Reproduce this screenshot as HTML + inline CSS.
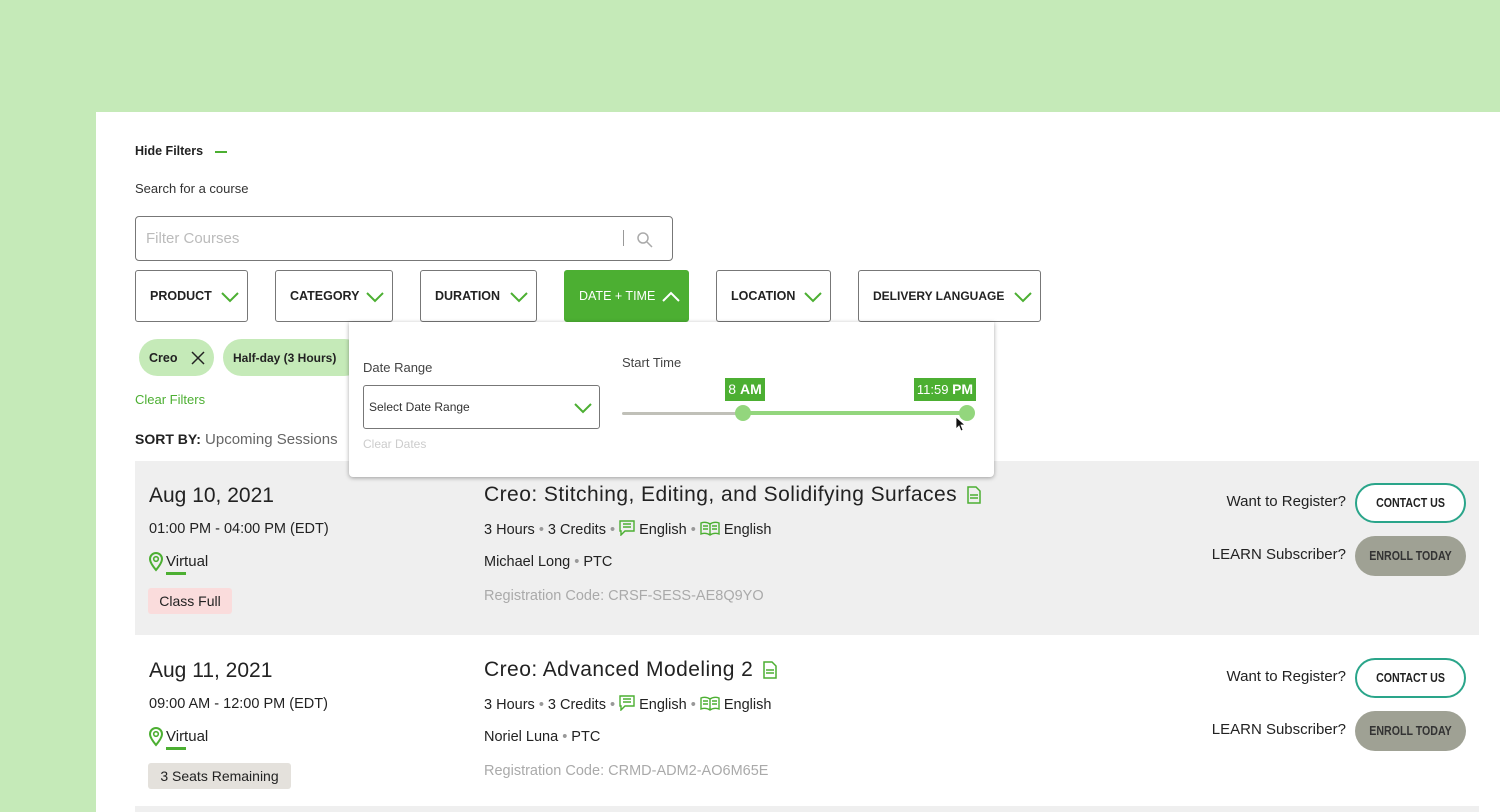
<!DOCTYPE html>
<html><head><meta charset="utf-8"><style>
*{box-sizing:border-box;margin:0;padding:0}
body{width:1500px;height:812px;overflow:hidden;background:#c5eab8;font-family:"Liberation Sans",sans-serif;color:#222;position:relative}
.abs{position:absolute}
.panel{left:96px;top:112px;width:1404px;height:700px;background:#fff}
.dd{top:270px;height:52px;border:1px solid #777;border-radius:3px;background:#fff;font-size:12.5px;font-weight:bold;display:flex;align-items:center;padding-left:14px;color:#222}
.dd svg{position:absolute;right:8px;top:20px}
.chip{top:339px;height:37px;border-radius:19px;background:#c5eab8;font-size:12.5px;font-weight:bold;display:flex;align-items:center;padding-left:10px}
.card{left:135px;width:1344px;height:174px}
.date{font-size:21px;color:#222}
.t{font-size:14.5px}
.g{color:#999}
.btn{width:111px;height:40px;border-radius:20px;font-size:12.5px;font-weight:bold;display:flex;align-items:center;justify-content:center}
.btn span{display:inline-block;transform:scaleX(.85)}
.c{border:2px solid #2aa58a;background:#fff;color:#222}
.e{background:#9fa194;color:#333}
.lab{font-size:15px;text-align:right;width:200px}
.title{font-size:21px;letter-spacing:.45px;display:flex;align-items:center;gap:10px}
.ic{display:inline-block;vertical-align:-2px}
</style></head><body>
<div class="abs panel"></div>
<div class="abs" style="left:135px;top:144px;font-size:12.5px;font-weight:bold">Hide Filters <span style="display:inline-block;width:12px;height:2px;background:#4caf32;vertical-align:middle;margin-left:8px"></span></div>
<div class="abs" style="left:135px;top:181px;font-size:13px;color:#333">Search for a course</div>
<div class="abs" style="left:135px;top:216px;width:538px;height:45px;border:1px solid #777;border-radius:4px;background:#fff"></div>
<div class="abs" style="left:146px;top:230px;font-size:15px;color:#bbb">Filter Courses</div>
<div class="abs" style="left:623px;top:230px;width:1px;height:16px;background:#999"></div>
<svg class="abs" style="left:636px;top:231px" width="18" height="18"><circle cx="7" cy="7" r="5" fill="none" stroke="#aaa" stroke-width="1.5"/><path d="M11 11l5 5" stroke="#aaa" stroke-width="1.5"/></svg>

<div class="abs dd" style="left:135px;width:113px">PRODUCT<svg width="18" height="12"><path d="M1 2l8 8 8-8" fill="none" stroke="#4caf32" stroke-width="2"/></svg></div>
<div class="abs dd" style="left:275px;width:118px">CATEGORY<svg width="18" height="12"><path d="M1 2l8 8 8-8" fill="none" stroke="#4caf32" stroke-width="2"/></svg></div>
<div class="abs dd" style="left:420px;width:117px">DURATION<svg width="18" height="12"><path d="M1 2l8 8 8-8" fill="none" stroke="#4caf32" stroke-width="2"/></svg></div>
<div class="abs dd" style="left:564px;width:125px;background:#4caf32;border-color:#4caf32;color:#fff;font-weight:normal">DATE + TIME<svg width="18" height="12"><path d="M1 10l8-8 8 8" fill="none" stroke="#fff" stroke-width="2"/></svg></div>
<div class="abs dd" style="left:716px;width:115px">LOCATION<svg width="18" height="12"><path d="M1 2l8 8 8-8" fill="none" stroke="#4caf32" stroke-width="2"/></svg></div>
<div class="abs dd" style="left:858px;width:183px;font-size:12px">DELIVERY LANGUAGE<svg width="18" height="12"><path d="M1 2l8 8 8-8" fill="none" stroke="#4caf32" stroke-width="2"/></svg></div>

<div class="abs chip" style="left:139px;width:75px">Creo <svg style="margin-left:14px" width="14" height="14"><path d="M1 1l12 12M13 1L1 13" stroke="#222" stroke-width="1.5"/></svg></div>
<div class="abs chip" style="left:223px;width:140px;font-size:12px">Half-day (3 Hours)</div>
<div class="abs" style="left:135px;top:392px;font-size:13px;color:#4caf32">Clear Filters</div>
<div class="abs" style="left:135px;top:431px;font-size:15px"><b style="font-size:14px">SORT BY:</b> <span style="color:#666">Upcoming Sessions</span></div>

<div class="abs card" style="top:461px;background:#efefef"></div>
<div class="abs card" style="top:635px;background:#fff"></div>
<div class="abs" style="left:135px;top:806px;width:1344px;height:6px;background:#efefef"></div>

<div class="abs" style="left:349px;top:322px;width:645px;height:155px;background:#fff;box-shadow:0 1px 4px rgba(0,0,0,.35);border-radius:0 0 4px 4px"></div>
<div class="abs" style="left:363px;top:360px;font-size:13px;color:#444">Date Range</div>
<div class="abs" style="left:363px;top:385px;width:237px;height:44px;border:1px solid #777;border-radius:3px"></div>
<div class="abs" style="left:369px;top:400px;font-size:12px;color:#333">Select Date Range</div>
<svg class="abs" style="left:574px;top:402px" width="18" height="12"><path d="M1 2l8 8 8-8" fill="none" stroke="#4caf32" stroke-width="2"/></svg>
<div class="abs" style="left:363px;top:437px;font-size:12px;color:#ccc">Clear Dates</div>
<div class="abs" style="left:622px;top:355px;font-size:13px;color:#444">Start Time</div>
<div class="abs" style="left:725px;top:378px;width:40px;height:23px;background:#4caf32;color:#fff;font-size:14px;text-align:center;line-height:23px">8 <b>AM</b></div>
<div class="abs" style="left:914px;top:378px;width:62px;height:23px;background:#4caf32;color:#fff;font-size:13px;text-align:center;line-height:23px">11:59 <b style="font-size:14px">PM</b></div>
<div class="abs" style="left:622px;top:412px;width:121px;height:3px;background:#c0c0b8;border-radius:2px"></div>
<div class="abs" style="left:743px;top:411px;width:224px;height:4px;background:#93d67d"></div>
<div class="abs" style="left:735px;top:405px;width:16px;height:16px;border-radius:50%;background:#93d67d"></div>
<div class="abs" style="left:959px;top:405px;width:16px;height:16px;border-radius:50%;background:#93d67d"></div>
<svg class="abs" style="left:955px;top:416px" width="10" height="16"><path d="M1 1v12l3-3 2 5 2-1-2-5h4z" fill="#111" stroke="#fff" stroke-width=".8"/></svg>

<!-- card 1 -->
<div class="abs date" style="left:149px;top:484px">Aug 10, 2021</div>
<div class="abs t" style="left:149px;top:521px">01:00 PM - 04:00 PM (EDT)</div>
<svg class="abs" style="left:148px;top:552px" width="16" height="20"><path d="M8 18C3 12 2 9 2 7a6 6 0 0112 0c0 2-1 5-6 11z" fill="none" stroke="#4caf32" stroke-width="2"/><circle cx="8" cy="7" r="2.3" fill="none" stroke="#4caf32" stroke-width="1.6"/></svg>
<div class="abs" style="left:166px;top:553px;font-size:15px">Virtual</div>
<div class="abs" style="left:166px;top:572px;width:20px;height:3px;background:#4caf32"></div>
<div class="abs" style="left:148px;top:588px;width:84px;height:26px;background:#fadcdc;border-radius:3px;font-size:14px;line-height:26px;text-align:center">Class Full</div>
<div class="abs title" style="left:484px;top:483px">Creo: Stitching, Editing, and Solidifying Surfaces <svg width="14" height="18"><path d="M1 1h8l4 4v12H1z M3 9h8M3 12h8" fill="none" stroke="#4caf32" stroke-width="1.5"/></svg></div>
<div class="abs t" style="left:484px;top:520px">3 Hours <span class="g">•</span> 3 Credits <span class="g">•</span> <svg class="ic" width="16" height="16"><path d="M1 1h14v10H6l-4 4v-4H1z M4 4h8M4 7h8" fill="none" stroke="#4caf32" stroke-width="1.4"/></svg> English <span class="g">•</span> <svg class="ic" width="20" height="16"><path d="M1 3c3-1 6-1 9 1 3-2 6-2 9-1v11c-3-1-6-1-9 1-3-2-6-2-9-1z M10 4v11 M3 6h5M3 9h5M12 6h5M12 9h5" fill="none" stroke="#4caf32" stroke-width="1.4"/></svg> English</div>
<div class="abs t" style="left:484px;top:554px">Michael Long <span class="g">•</span> PTC</div>
<div class="abs t" style="left:484px;top:588px;color:#aaa">Registration Code: CRSF-SESS-AE8Q9YO</div>
<div class="abs lab" style="left:1146px;top:493px">Want to Register?</div>
<div class="abs btn c" style="left:1355px;top:483px"><span>CONTACT US</span></div>
<div class="abs lab" style="left:1146px;top:546px">LEARN Subscriber?</div>
<div class="abs btn e" style="left:1355px;top:536px"><span>ENROLL TODAY</span></div>

<!-- card 2 -->
<div class="abs date" style="left:149px;top:659px">Aug 11, 2021</div>
<div class="abs t" style="left:149px;top:696px">09:00 AM - 12:00 PM (EDT)</div>
<svg class="abs" style="left:148px;top:727px" width="16" height="20"><path d="M8 18C3 12 2 9 2 7a6 6 0 0112 0c0 2-1 5-6 11z" fill="none" stroke="#4caf32" stroke-width="2"/><circle cx="8" cy="7" r="2.3" fill="none" stroke="#4caf32" stroke-width="1.6"/></svg>
<div class="abs" style="left:166px;top:728px;font-size:15px">Virtual</div>
<div class="abs" style="left:166px;top:747px;width:20px;height:3px;background:#4caf32"></div>
<div class="abs" style="left:148px;top:763px;width:143px;height:26px;background:#e4e1dc;border-radius:3px;font-size:14px;line-height:26px;text-align:center">3 Seats Remaining</div>
<div class="abs title" style="left:484px;top:658px">Creo: Advanced Modeling 2 <svg width="14" height="18"><path d="M1 1h8l4 4v12H1z M3 9h8M3 12h8" fill="none" stroke="#4caf32" stroke-width="1.5"/></svg></div>
<div class="abs t" style="left:484px;top:695px">3 Hours <span class="g">•</span> 3 Credits <span class="g">•</span> <svg class="ic" width="16" height="16"><path d="M1 1h14v10H6l-4 4v-4H1z M4 4h8M4 7h8" fill="none" stroke="#4caf32" stroke-width="1.4"/></svg> English <span class="g">•</span> <svg class="ic" width="20" height="16"><path d="M1 3c3-1 6-1 9 1 3-2 6-2 9-1v11c-3-1-6-1-9 1-3-2-6-2-9-1z M10 4v11 M3 6h5M3 9h5M12 6h5M12 9h5" fill="none" stroke="#4caf32" stroke-width="1.4"/></svg> English</div>
<div class="abs t" style="left:484px;top:729px">Noriel Luna <span class="g">•</span> PTC</div>
<div class="abs t" style="left:484px;top:763px;color:#aaa">Registration Code: CRMD-ADM2-AO6M65E</div>
<div class="abs lab" style="left:1146px;top:668px">Want to Register?</div>
<div class="abs btn c" style="left:1355px;top:658px"><span>CONTACT US</span></div>
<div class="abs lab" style="left:1146px;top:721px">LEARN Subscriber?</div>
<div class="abs btn e" style="left:1355px;top:711px"><span>ENROLL TODAY</span></div>
</body></html>
